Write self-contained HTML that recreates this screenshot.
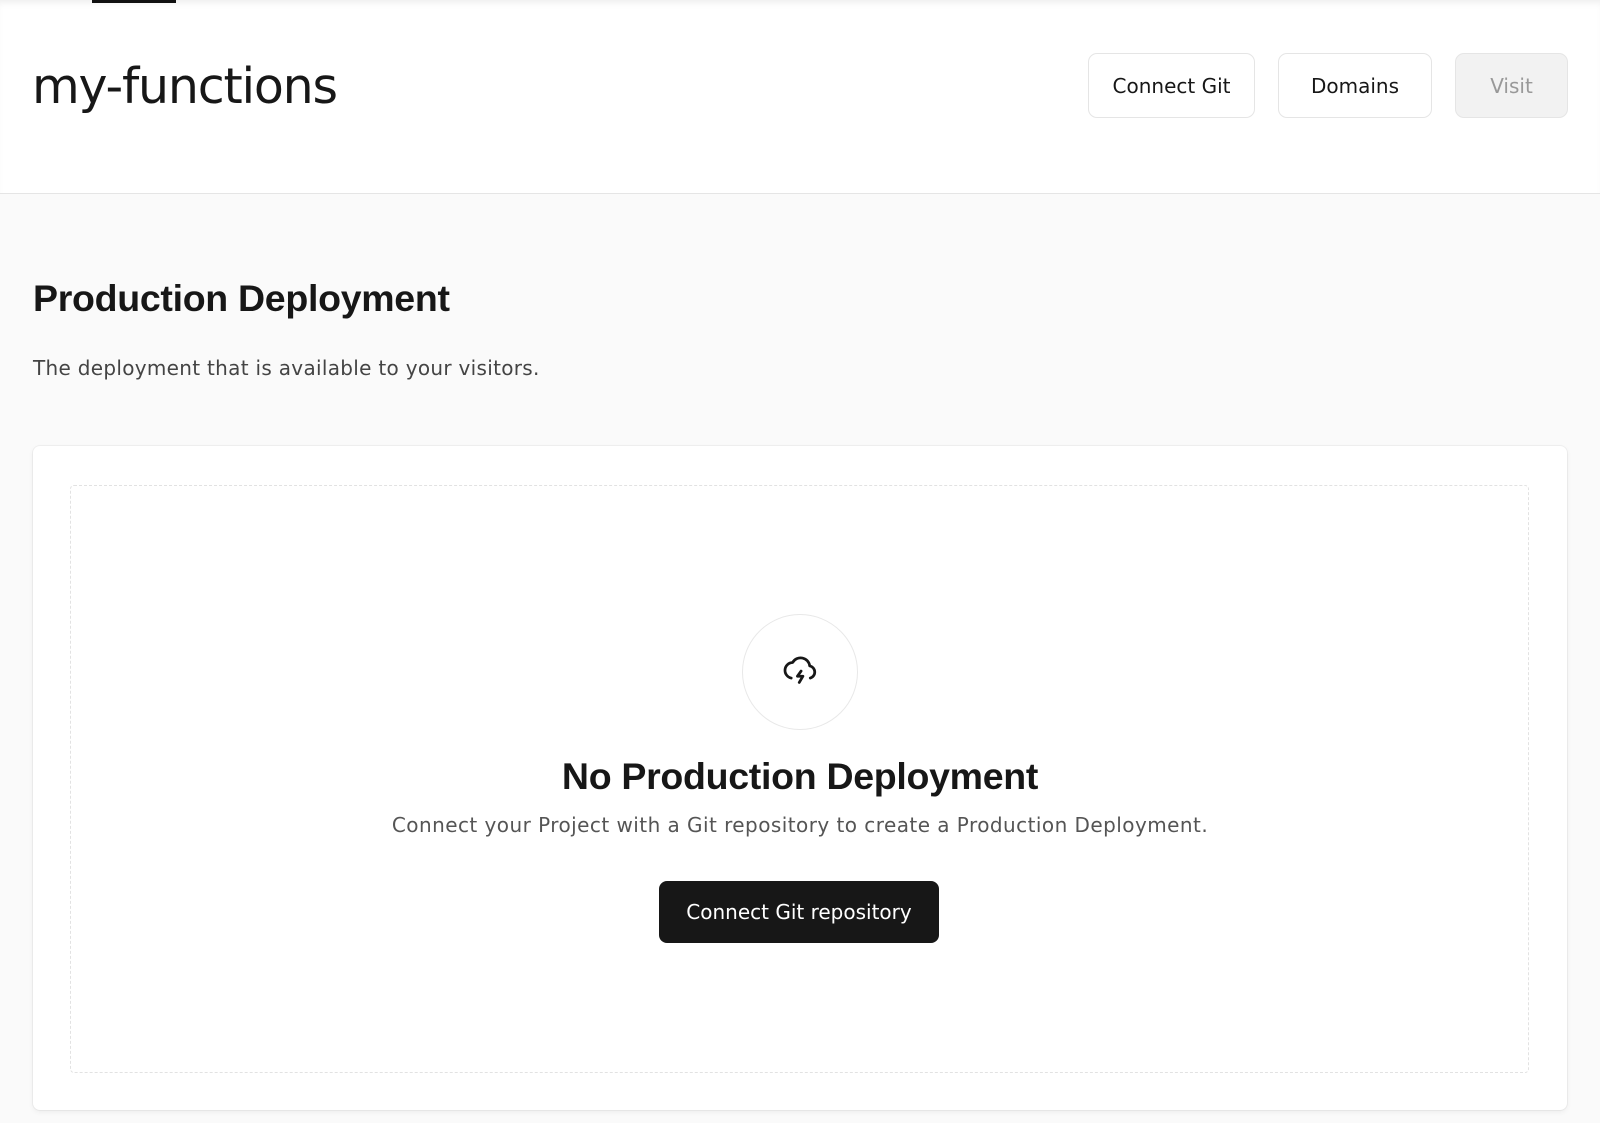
<!DOCTYPE html>
<html><head><meta charset="utf-8"><style>
*{box-sizing:border-box;margin:0;padding:0}
body{width:1600px;height:1123px;overflow:hidden;background:#fafafa;font-family:"DejaVu Sans",sans-serif;color:#171717;position:relative}
.hdr{position:absolute;left:0;top:0;width:1600px;height:194px;background:#fff;border-bottom:1px solid #e5e5e5;box-shadow:inset 0 6px 8px -4px rgba(0,0,0,.08)}
.bar{position:absolute;left:92px;top:0;width:84px;height:3px;background:#111}
h1{position:absolute;left:32px;top:55px;font-size:49px;font-weight:400;letter-spacing:-1.2px;line-height:64px}
.btn{position:absolute;top:53px;height:65px;border:1px solid #e5e5e5;border-radius:9px;background:#fff;font-size:20px;display:flex;align-items:center;justify-content:center;color:#171717}
h2{position:absolute;left:33px;top:277px;font-size:37.5px;font-weight:700;letter-spacing:-.3px;font-family:"Liberation Sans",sans-serif}
.sub{position:absolute;left:33px;top:356px;font-size:20px;color:#444;letter-spacing:.3px}
.card{position:absolute;left:33px;top:446px;width:1534px;height:664px;background:#fff;border-radius:7px;box-shadow:0 0 0 1px rgba(0,0,0,.04),0 2px 6px rgba(0,0,0,.06)}
.dash{position:absolute;left:37px;top:39px;width:1459px;height:588px;border:1px dashed #e2e2e2;border-radius:4px}
.circ{position:absolute;left:709px;top:168px;width:116px;height:116px;border:1px solid #e8e8e8;border-radius:50%;display:flex;align-items:center;justify-content:center}
.t{position:absolute;left:0;width:1534px;text-align:center}
.cta{position:absolute;left:626px;top:435px;width:280px;height:62px;background:#171717;color:#fff;border-radius:8px;font-size:20px;display:flex;align-items:center;justify-content:center}
</style></head><body>
<div class="hdr"><div class="bar"></div>
<h1>my-functions</h1>
<div class="btn" style="left:1088px;width:167px">Connect Git</div>
<div class="btn" style="left:1278px;width:154px">Domains</div>
<div class="btn" style="left:1455px;width:113px;background:#f2f2f2;color:#999">Visit</div>
</div>
<h2>Production Deployment</h2>
<div class="sub">The deployment that is available to your visitors.</div>
<div class="card"><div class="dash"></div>
<div class="circ"><svg width="44" height="44" viewBox="0 0 24 24" fill="none" stroke="#171717" stroke-width="1.5" stroke-linecap="round" stroke-linejoin="round"><path d="M7.2 15.3A4.3 4.3 0 0 1 8 6.8a5 5 0 0 1 9.3 1.9 3.4 3.4 0 0 1 .3 6.6"/><path d="M12.6 11.5l-2 2.8h3l-2 3.4"/></svg></div>
<div class="t" style="top:309px;font-size:37.5px;font-weight:700;letter-spacing:-.3px;font-family:'Liberation Sans',sans-serif">No Production Deployment</div>
<div class="t" style="top:367px;font-size:20px;color:#555;letter-spacing:.45px">Connect your Project with a Git repository to create a Production Deployment.</div>
<div class="cta">Connect Git repository</div>
</div>
</body></html>
